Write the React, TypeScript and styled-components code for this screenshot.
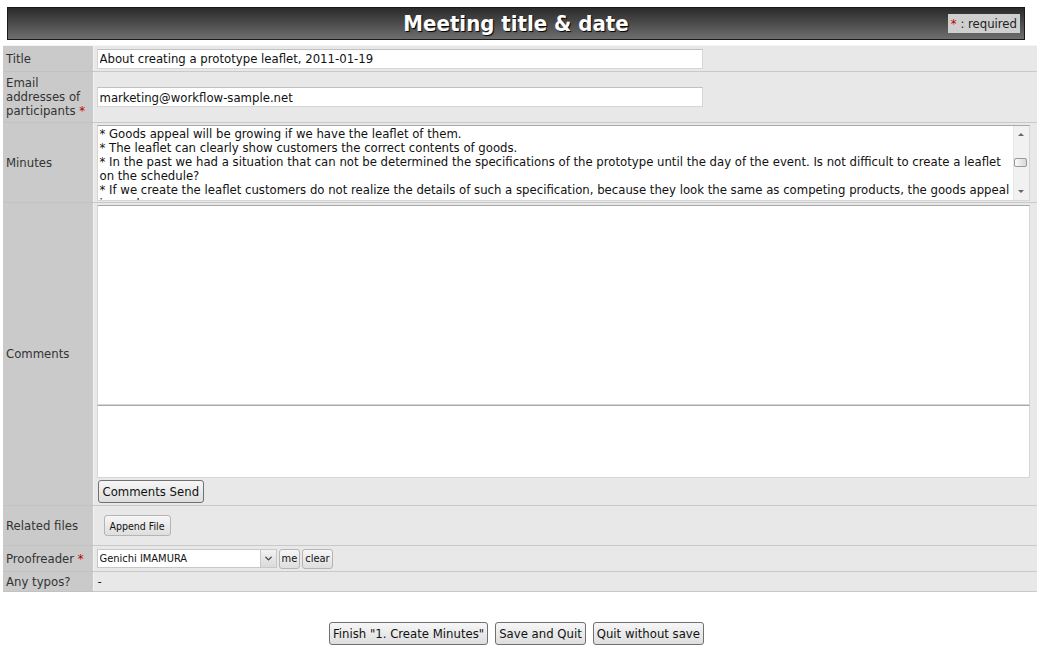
import { createGlobalStyle } from "styled-components";
import styled from "styled-components";
import { ChevronDown } from "lucide-react";

const GlobalStyle = createGlobalStyle`
  html, body {
    margin: 0;
    padding: 0;
    background: #ffffff;
  }
  body {
    font-family: "DejaVu Sans Condensed", "DejaVu Sans", "Liberation Sans", sans-serif;
    font-size: 13px;
    color: #222;
  }
`;

const Page = styled.div`
  width: 1037px;
  padding: 7px 0 0 3px;
  box-sizing: border-box;
`;

const Header = styled.div`
  position: relative;
  margin: 0 12px 5px 4px;
  height: 33px;
  box-sizing: border-box;
  border: 1px solid #1a1a1a;
  background: linear-gradient(#2a2a2a, #6e6e6e);
  display: flex;
  align-items: center;
  justify-content: center;
`;

const HeaderTitle = styled.h1`
  margin: 0;
  font-size: 22px;
  font-weight: bold;
  color: #fff;
  text-shadow: 1px 1px 1px #000;
`;

const RequiredNote = styled.span`
  position: absolute;
  right: 4px;
  top: 6px;
  height: 19px;
  line-height: 19px;
  background: #cfcfcf;
  color: #222;
  font-size: 13px;
  padding: 0 3px;
`;

const Star = styled.span`
  color: #c00000;
`;

const FormTable = styled.table`
  width: 1034px;
  border-collapse: collapse;
  border-spacing: 0;
`;

const Row = styled.tr<{ $h: number }>`
  height: ${(p) => p.$h}px;
`;

const Label = styled.th`
  width: 90px;
  box-sizing: border-box;
  background: #cacaca;
  color: #333;
  font-weight: normal;
  text-align: left;
  vertical-align: middle;
  padding: 0 3px;
  line-height: 14px;
  border-top: 1px solid #f4f4f4;
  border-bottom: 1px solid #c2c2c2;
  border-right: 1px solid #f4f4f4;
`;

const Value = styled.td`
  background: #e8e8e8;
  vertical-align: middle;
  padding: 1px 3px;
  border-top: 1px solid #f4f4f4;
  border-bottom: 1px solid #c9c9c9;
`;

const TextInput = styled.input`
  display: block;
  width: 606px;
  height: 20px;
  box-sizing: border-box;
  border: 1px solid #d6d6d6;
  border-top-color: #c0c0c0;
  background: #fff;
  padding: 1px 2px;
  font-family: inherit;
  font-size: 13px;
  color: #111;
`;

const Area = styled.textarea<{ $h: number }>`
  display: block;
  width: 933px;
  height: ${(p) => p.$h}px;
  box-sizing: border-box;
  border: 1px solid #d6d6d6;
  border-top-color: #a8a8a8;
  background: #fff;
  padding: 1px 2px;
  margin: 0;
  resize: none;
  font-family: inherit;
  font-size: 13px;
  line-height: 14px;
  color: #111;
`;

const ScrollBox = styled.div`
  display: flex;
  width: 933px;
  height: 76px;
  box-sizing: border-box;
  border: 1px solid #d6d6d6;
  border-top-color: #a8a8a8;
  background: #fff;
`;

const ScrollText = styled.textarea`
  flex: 1;
  min-width: 0;
  border: none;
  outline: none;
  background: transparent;
  padding: 1px 0 1px 2px;
  margin: 0;
  resize: none;
  overflow: hidden;
  font-family: inherit;
  font-size: 13px;
  line-height: 14px;
  color: #111;
`;

const ScrollTrack = styled.div`
  width: 16px;
  display: flex;
  flex-direction: column;
  align-items: center;
  background: #f1f1f1;
  box-shadow: inset 1px 0 0 #e6e6e6;
`;

const ScrollArrow = styled.div<{ $down?: boolean }>`
  height: 17px;
  width: 100%;
  display: flex;
  align-items: center;
  justify-content: center;

  &::before {
    content: "";
    border-left: 3px solid transparent;
    border-right: 3px solid transparent;
    ${(p) => (p.$down ? "border-top: 3px solid #666;" : "border-bottom: 3px solid #666;")}
  }
`;

const ScrollRail = styled.div`
  flex: 1;
  display: flex;
  align-items: center;
  justify-content: center;
`;

const ScrollThumb = styled.div`
  width: 13px;
  height: 9px;
  box-sizing: border-box;
  border: 1px solid #9a9a9a;
  border-radius: 2px;
  background: linear-gradient(to right, #fafafa, #d8d8d8);
`;

const Button = styled.button<{ $small?: boolean }>`
  font-family: inherit;
  font-size: ${(p) => (p.$small ? "11px" : "13px")};
  color: #111;
  height: ${(p) => (p.$small ? "20px" : "23px")};
  padding: 0 ${(p) => (p.$small ? "2px" : "3px")};
  border: 1px solid ${(p) => (p.$small ? "#b5b5b5" : "#707070")};
  border-radius: 3px;
  background: linear-gradient(#f6f6f6, #dedede);
  cursor: pointer;
`;

const SendButton = styled(Button)`
  margin-top: 2px;
  margin-left: 1px;
  padding: 0 4px;
`;

const AppendButton = styled(Button)`
  margin-left: 7px;
  font-size: 10.5px;
  height: 21px;
  padding: 0 5px;
`;

const PickerRow = styled.div`
  display: flex;
  align-items: center;
  gap: 2px;
`;

const SelectWrap = styled.div`
  position: relative;
  width: 180px;
  height: 19px;
`;

const Select = styled.select`
  appearance: none;
  width: 100%;
  height: 100%;
  box-sizing: border-box;
  border: 1px solid #c8c8c8;
  background: #fff;
  font-family: inherit;
  font-size: 11px;
  color: #111;
  padding: 0 18px 0 2px;
`;

const SelectArrow = styled.span`
  position: absolute;
  right: 1px;
  top: 1px;
  bottom: 1px;
  width: 15px;
  display: flex;
  align-items: center;
  justify-content: center;
  background: linear-gradient(#f2f2f2, #dadada);
  border-left: 1px solid #c8c8c8;
  color: #444;
  pointer-events: none;
`;

const Plain = styled.span`
  padding-left: 1px;
`;

const Footer = styled.div`
  display: flex;
  justify-content: center;
  gap: 7px;
  padding: 30px 7px 10px 0;
`;

const minutes = `* Goods appeal will be growing if we have the leaflet of them.
* The leaflet can clearly show customers the correct contents of goods.
* In the past we had a situation that can not be determined the specifications of the prototype until the day of the event. Is not difficult to create a leaflet on the schedule?
* If we create the leaflet customers do not realize the details of such a specification, because they look the same as competing products, the goods appeal is weak.
* We should prepare a sample.`;

export default function App() {
  return (
    <Page>
      <GlobalStyle />
      <Header>
        <HeaderTitle>Meeting title &amp; date</HeaderTitle>
        <RequiredNote>
          <Star>*</Star> : required
        </RequiredNote>
      </Header>
      <FormTable>
        <tbody>
          <Row $h={26}>
            <Label>Title</Label>
            <Value>
              <TextInput defaultValue="About creating a prototype leaflet, 2011-01-19" />
            </Value>
          </Row>
          <Row $h={51}>
            <Label>
              Email addresses of participants <Star>*</Star>
            </Label>
            <Value>
              <TextInput defaultValue="marketing@workflow-sample.net" />
            </Value>
          </Row>
          <Row $h={80}>
            <Label>Minutes</Label>
            <Value>
              <ScrollBox>
                <ScrollText readOnly defaultValue={minutes} />
                <ScrollTrack>
                  <ScrollArrow />
                  <ScrollRail>
                    <ScrollThumb />
                  </ScrollRail>
                  <ScrollArrow $down />
                </ScrollTrack>
              </ScrollBox>
            </Value>
          </Row>
          <Row $h={303}>
            <Label>Comments</Label>
            <Value>
              <Area $h={200} readOnly />
              <Area $h={73} />
              <SendButton>Comments Send</SendButton>
            </Value>
          </Row>
          <Row $h={40}>
            <Label>Related files</Label>
            <Value>
              <AppendButton $small>Append File</AppendButton>
            </Value>
          </Row>
          <Row $h={26}>
            <Label>
              Proofreader <Star>*</Star>
            </Label>
            <Value>
              <PickerRow>
                <SelectWrap>
                  <Select defaultValue="imamura">
                    <option value="imamura">Genichi IMAMURA</option>
                  </Select>
                  <SelectArrow>
                    <ChevronDown size={11} strokeWidth={3} />
                  </SelectArrow>
                </SelectWrap>
                <Button $small>me</Button>
                <Button $small>clear</Button>
              </PickerRow>
            </Value>
          </Row>
          <Row $h={20}>
            <Label>Any typos?</Label>
            <Value>
              <Plain>-</Plain>
            </Value>
          </Row>
        </tbody>
      </FormTable>
      <Footer>
        <Button>Finish "1. Create Minutes"</Button>
        <Button>Save and Quit</Button>
        <Button>Quit without save</Button>
      </Footer>
    </Page>
  );
}
